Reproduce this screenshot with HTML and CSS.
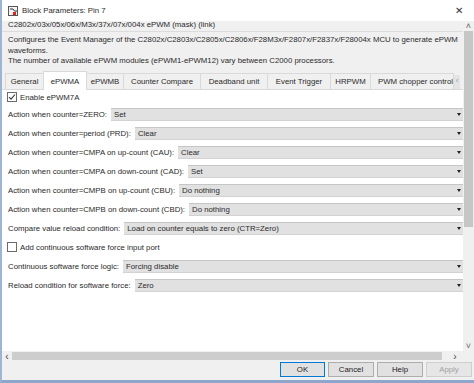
FILE: index.html
```html
<!DOCTYPE html>
<html lang="en">
  <head>
    <meta charset="UTF-8" />
    <meta name="viewport" content="width=device-width, initial-scale=1.0" />
    <title>Block Parameters: Pin 7</title>
    <link rel="stylesheet" href="styles.css">
  </head>
  <body>
    <div class="window">
      <div class="titlebar">
        <svg class="app-icon" width="10" height="10" viewBox="0 0 10 10">
          <rect x="0.5" y="0.5" width="9" height="9" fill="#f4f4f4" stroke="#555" />
          <path d="M2 3 H5 L6.5 5 H9" fill="none" stroke="#333" stroke-width="1" />
          <rect x="5" y="6" width="3" height="3" fill="#d22" />
        </svg>
        <span class="title">Block Parameters: Pin 7</span>
        <span class="close">&#x2715;</span>
      </div>

      <div class="main">
        <div class="pane">
          <div class="mask-title">C2802x/03x/05x/06x/M3x/37x/07x/004x ePWM (mask) (link)</div>
          <div class="desc">
            Configures the Event Manager of the C2802x/C2803x/C2805x/C2806x/F28M3x/F2807x/F2837x/F28004x MCU to generate ePWM<br />
            waveforms.<br />
            The number of available ePWM modules (ePWM1-ePWM12) vary between C2000 processors.
          </div>

          <div class="tabs">
            <div class="tab tab-general">General</div>
            <div class="tab tab-active tab-a">ePWMA</div>
            <div class="tab tab-b">ePWMB</div>
            <div class="tab tab-cc">Counter Compare</div>
            <div class="tab tab-db">Deadband unit</div>
            <div class="tab tab-et">Event Trigger</div>
            <div class="tab tab-hr">HRPWM</div>
            <div class="tab tab-pc">PWM chopper control</div>
            <div class="tab-scroll">&#x2039;</div>
          </div>

          <div class="content">
            <label class="check-row">
              <span class="checkbox checked">
                <svg width="8" height="8" viewBox="0 0 8 8"><path d="M1 4 L3 6.2 L7 1.5" fill="none" stroke="#333" stroke-width="1.1" /></svg>
              </span>
              Enable ePWM7A
            </label>

            <div class="row">
              <span class="label">Action when counter=ZERO:</span>
              <div class="select">Set</div>
            </div>
            <div class="row">
              <span class="label">Action when counter=period (PRD):</span>
              <div class="select">Clear</div>
            </div>
            <div class="row">
              <span class="label">Action when counter=CMPA on up-count (CAU):</span>
              <div class="select">Clear</div>
            </div>
            <div class="row">
              <span class="label">Action when counter=CMPA on down-count (CAD):</span>
              <div class="select">Set</div>
            </div>
            <div class="row">
              <span class="label">Action when counter=CMPB on up-count (CBU):</span>
              <div class="select">Do nothing</div>
            </div>
            <div class="row">
              <span class="label">Action when counter=CMPB on down-count (CBD):</span>
              <div class="select">Do nothing</div>
            </div>
            <div class="row">
              <span class="label">Compare value reload condition:</span>
              <div class="select">Load on counter equals to zero (CTR=Zero)</div>
            </div>

            <label class="check-row">
              <span class="checkbox"></span>
              Add continuous software force input port
            </label>

            <div class="row">
              <span class="label">Continuous software force logic:</span>
              <div class="select">Forcing disable</div>
            </div>
            <div class="row">
              <span class="label">Reload condition for software force:</span>
              <div class="select">Zero</div>
            </div>
          </div>
        </div>

        <div class="vscroll">
          <span class="arrow">&#x02C4;</span>
          <div class="vthumb"></div>
          <div class="vtrack"></div>
          <span class="arrow">&#x02C5;</span>
        </div>
      </div>

      <div class="hscroll">
        <span class="arrow">&#x2039;</span>
        <div class="hthumb"></div>
        <span class="arrow">&#x203A;</span>
      </div>

      <div class="buttons">
        <button class="btn btn-default">OK</button>
        <button class="btn">Cancel</button>
        <button class="btn">Help</button>
        <button class="btn btn-disabled">Apply</button>
      </div>
    </div>
  </body>
</html>
```

FILE: styles.css
```css
body {
  margin: 0;
  font-family: "Liberation Sans", Arial, sans-serif;
  font-size: 7.8px;
  color: #2a2a2a;
  background-color: #f0f0f0;
}
.window {
  width: 474px;
  height: 383px;
  box-sizing: border-box;
  border-left: 2px solid #9fb4d4;
  border-bottom: 3px solid #8fa6cc;
  background-color: #f0f0f0;
  display: flex;
  flex-direction: column;
  overflow: hidden;
}
.titlebar {
  height: 21px;
  flex-shrink: 0;
  background-color: #fff;
  display: flex;
  align-items: center;
  padding-left: 6px;
}
.app-icon {
  margin-right: 4px;
}
.title {
  flex: 1;
}
.close {
  width: 14px;
  font-size: 10px;
  color: #333;
  margin-right: 5px;
}
.main {
  display: flex;
  height: 330px;
  flex-shrink: 0;
}
.pane {
  flex: 1;
  display: flex;
  flex-direction: column;
  min-width: 0;
}
.mask-title {
  height: 12px;
  line-height: 12px;
  padding-left: 6px;
  margin-top: -2px;
  white-space: nowrap;
}
.desc {
  border-top: 1px solid #dcdcdc;
  padding: 3px 0 0 6px;
  height: 37px;
  line-height: 10.5px;
  white-space: nowrap;
}
.tabs {
  display: flex;
  align-items: flex-end;
  height: 17px;
  padding-left: 3px;
  border-bottom: 1px solid #d9d9d9;
}
.tab {
  height: 16px;
  box-sizing: border-box;
  border: 1px solid #d9d9d9;
  border-bottom: none;
  margin-right: -1px;
  background-color: #f0f0f0;
  display: flex;
  align-items: center;
  justify-content: center;
  white-space: nowrap;
  overflow: hidden;
}
.tab-active {
  background-color: #fff;
  margin-bottom: -1px;
  height: 19px;
}
.tab-general { width: 39px; }
.tab-a { width: 44px; }
.tab-b { width: 38px; }
.tab-cc { width: 78px; }
.tab-db { width: 68px; }
.tab-et { width: 64px; }
.tab-hr { width: 41px; }
.tab-pc { width: 84px; justify-content: flex-start; padding-left: 7px; }
.tab-scroll {
  width: 6px;
  height: 14px;
  margin-left: 1px;
  background-color: #e4e4e4;
  color: #999;
  font-size: 8px;
  text-align: center;
  line-height: 12px;
}
.content {
  flex: 1;
  background-color: #fff;
  padding: 0 0 0 5px;
}
.check-row {
  height: 14px;
  display: flex;
  align-items: center;
  gap: 3px;
}
.check-row + .row {
  margin-top: 0.5px;
}
.row + .check-row {
  height: 19px;
}
.checkbox {
  width: 8px;
  height: 8px;
  border: 1px solid #6a6a6a;
  background-color: #fff;
  display: flex;
  align-items: center;
  justify-content: center;
}
.row {
  height: 19px;
  display: flex;
  align-items: center;
  gap: 4px;
}
.label {
  padding-left: 1px;
  white-space: nowrap;
}
.select {
  flex: 1;
  height: 13px;
  box-sizing: border-box;
  background-color: #e1e1e1;
  border-top: 1px solid #c6c6c6;
  border-bottom: 1px solid #d2d2d2;
  padding-left: 3px;
  display: flex;
  align-items: center;
  position: relative;
  white-space: nowrap;
}
.select::after {
  content: "";
  position: absolute;
  right: 2px;
  top: 4px;
  border-left: 2.5px solid transparent;
  border-right: 2.5px solid transparent;
  border-top: 3px solid #222;
}
.vscroll {
  width: 11px;
  display: flex;
  flex-direction: column;
  align-items: center;
  background-color: #f0f0f0;
}
.vscroll .arrow {
  height: 10px;
  font-size: 9px;
  color: #666;
  line-height: 10px;
}
.vthumb {
  width: 9px;
  height: 196px;
  background-color: #c6c6c6;
}
.vtrack {
  flex: 1;
}
.hscroll {
  height: 10px;
  width: 460px;
  flex-shrink: 0;
  display: flex;
  align-items: center;
  background-color: #f0f0f0;
}
.hscroll .arrow {
  width: 10px;
  text-align: center;
  font-size: 10px;
  color: #444;
}
.hthumb {
  width: 430px;
  height: 8px;
  background-color: #cdcdcd;
  margin-right: 8px;
}
.buttons {
  flex: 1;
  display: flex;
  justify-content: flex-end;
  align-items: flex-start;
  gap: 3px;
  padding: 1px 2px 0 0;
}
.btn {
  width: 46px;
  height: 15px;
  padding: 0;
  font-family: inherit;
  font-size: 7.8px;
  color: #222;
  background-color: #e1e1e1;
  border: 1px solid #adadad;
  border-radius: 0;
}
.btn-default {
  width: 45px;
  border: 1px solid #0078d7;
}
.btn-disabled {
  color: #a0a0a0;
  background-color: #e6e6e6;
  border-color: #cfcfcf;
}
```
